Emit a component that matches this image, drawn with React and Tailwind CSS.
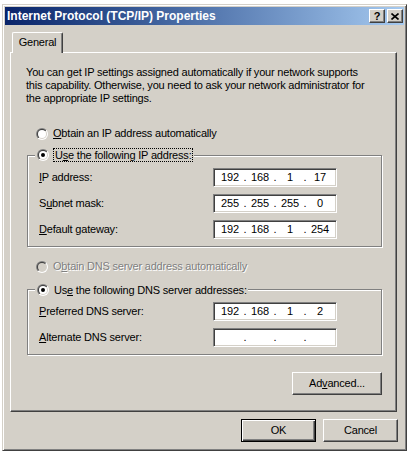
import React from "react";

const raised =
  "border border-t-white border-l-white border-r-[#404040] border-b-[#404040] shadow-[inset_-1px_-1px_0_#808080]";
const sunken =
  "border border-t-[#808080] border-l-[#808080] border-r-white border-b-white shadow-[inset_1px_1px_0_#404040,inset_-1px_-1px_0_#d4d0c8]";
const etched =
  "border border-[#808080] shadow-[inset_1px_1px_0_#fff,1px_1px_0_#fff]";

const Radio = ({ checked, disabled }) => (
  <svg width="12" height="12" viewBox="0 0 12 12" className="shrink-0">
    <defs>
      <linearGradient id="rOuter" x1="0" y1="0" x2="1" y2="1">
        <stop offset="0.5" stopColor="#808080" />
        <stop offset="0.5" stopColor="#ffffff" />
      </linearGradient>
      <linearGradient id="rInner" x1="0" y1="0" x2="1" y2="1">
        <stop offset="0.5" stopColor="#404040" />
        <stop offset="0.5" stopColor="#d4d0c8" />
      </linearGradient>
    </defs>
    <circle cx="6" cy="6" r="6" fill="url(#rOuter)" />
    <circle cx="6" cy="6" r="5" fill="url(#rInner)" />
    <circle cx="6" cy="6" r="4" fill={disabled ? "#d4d0c8" : "#ffffff"} />
    {checked && <circle cx="6" cy="6" r="2" fill="#000" />}
  </svg>
);

const IpBox = ({ parts }) => (
  <div className={`w-[124px] h-[19px] bg-white flex items-center pl-[3px] ${sunken}`}>
    {parts.map((p, i) => (
      <React.Fragment key={i}>
        {i > 0 && <span className="w-[4px] text-center">.</span>}
        <span className="w-[26px] text-center">{p}</span>
      </React.Fragment>
    ))}
  </div>
);

const Row = ({ label, parts }) => (
  <div className="flex items-center">
    <span className="w-[174px]">{label}</span>
    <IpBox parts={parts} />
  </div>
);

const Button = ({ children, primary, className = "" }) => (
  <div
    className={`h-[23px] flex items-center justify-center ${
      primary
        ? "border border-black shadow-[inset_1px_1px_0_#fff,inset_-1px_-1px_0_#404040,inset_-2px_-2px_0_#808080]"
        : raised
    } ${className}`}
  >
    {children}
  </div>
);

export default function App() {
  return (
    <div
      className="w-[415px] h-[457px] bg-white pt-[4px] pl-[2px] text-[11px] leading-[13px] tracking-[-0.2px] text-black"
      style={{ fontFamily: '"Liberation Sans", Arial, sans-serif' }}
    >
      <div className="w-[405px] h-[447px] bg-[#d4d0c8] border border-t-[#d4d0c8] border-l-[#d4d0c8] border-r-[#404040] border-b-[#404040] shadow-[inset_1px_1px_0_#fff,inset_-1px_-1px_0_#808080] p-[2px] flex flex-col">
        {/* title bar */}
        <div className="h-[18px] flex items-center justify-between pl-[2px] pr-[1px] bg-gradient-to-r from-[#0a246a] to-[#a6caf0]">
          <span className="font-bold text-white text-[12px] tracking-normal">
            Internet Protocol (TCP/IP) Properties
          </span>
          <div className="flex gap-[2px]">
            <div className={`w-[16px] h-[14px] bg-[#d4d0c8] flex items-center justify-center font-bold text-[11px] leading-none ${raised}`}>
              ?
            </div>
            <div className={`w-[16px] h-[14px] bg-[#d4d0c8] flex items-center justify-center ${raised}`}>
              <svg width="8" height="7" viewBox="0 0 8 7">
                <path d="M0.5 0.5 L7.5 6.5 M7.5 0.5 L0.5 6.5" stroke="#000" strokeWidth="1.6" />
              </svg>
            </div>
          </div>
        </div>

        {/* tab */}
        <div className="mt-[7px] ml-[7px] flex">
          <div className="relative z-10 -mb-px h-[21px] w-[51px] bg-[#d4d0c8] border-l border-t border-r border-l-white border-t-white border-r-[#404040] rounded-t-[2px] shadow-[inset_-1px_0_0_#808080] flex items-center justify-center pb-[2px]">
            General
          </div>
        </div>

        {/* panel */}
        <div className="ml-[5px] w-[387px] h-[360px] border border-l-white border-t-white border-r-[#404040] border-b-[#404040] shadow-[inset_-1px_-1px_0_#808080] pl-[15px] pt-[13px] flex flex-col">
          <p className="whitespace-nowrap">
            You can get IP settings assigned automatically if your network supports
            <br />
            this capability. Otherwise, you need to ask your network administrator for
            <br />
            the appropriate IP settings.
          </p>

          <div className="mt-[22px] ml-[10px] flex items-center gap-[5px] h-[13px]">
            <Radio />
            <span>
              <u>O</u>btain an IP address automatically
            </span>
          </div>

          <div className={`relative mt-[15px] ml-[1px] w-[355px] pt-[12px] pb-[7px] pl-[11px] flex flex-col gap-[7px] ${etched}`}>
            <div className="absolute -top-[8px] left-[7px] h-[14px] bg-[#d4d0c8] pl-[2px] pr-[1px] flex items-center gap-[4px]">
              <Radio checked />
              <span className="border border-dotted border-black px-px h-[14px] flex items-center">
                U<u>s</u>e the following IP address:
              </span>
            </div>
            <Row label={<><u>I</u>P address:</>} parts={["192", "168", "1", "17"]} />
            <Row label={<>S<u>u</u>bnet mask:</>} parts={["255", "255", "255", "0"]} />
            <Row label={<><u>D</u>efault gateway:</>} parts={["192", "168", "1", "254"]} />
          </div>

          <div className="mt-[13px] ml-[10px] flex items-center gap-[5px] h-[13px] text-[#808080] [text-shadow:1px_1px_0_#fff]">
            <Radio disabled />
            <span>
              O<u>b</u>tain DNS server address automatically
            </span>
          </div>

          <div className={`relative mt-[16px] ml-[1px] w-[355px] pt-[12px] pb-[7px] pl-[11px] flex flex-col gap-[7px] ${etched}`}>
            <div className="absolute -top-[7px] left-[7px] h-[14px] bg-[#d4d0c8] pl-[2px] pr-[1px] flex items-center gap-[5px]">
              <Radio checked />
              <span>
                Us<u>e</u> the following DNS server addresses:
              </span>
            </div>
            <Row label={<><u>P</u>referred DNS server:</>} parts={["192", "168", "1", "2"]} />
            <Row label={<><u>A</u>lternate DNS server:</>} parts={["", "", "", ""]} />
          </div>

          <div className="ml-[1px] w-[355px] flex justify-end mt-[17px]">
            <Button className="w-[90px]">
              Ad<u>v</u>anced...
            </Button>
          </div>
        </div>

        {/* dialog buttons */}
        <div className="mt-[7px] flex justify-end gap-[7px] pr-[6px]">
          <Button primary className="w-[75px]">OK</Button>
          <Button className="w-[75px]">Cancel</Button>
        </div>
      </div>
    </div>
  );
}
